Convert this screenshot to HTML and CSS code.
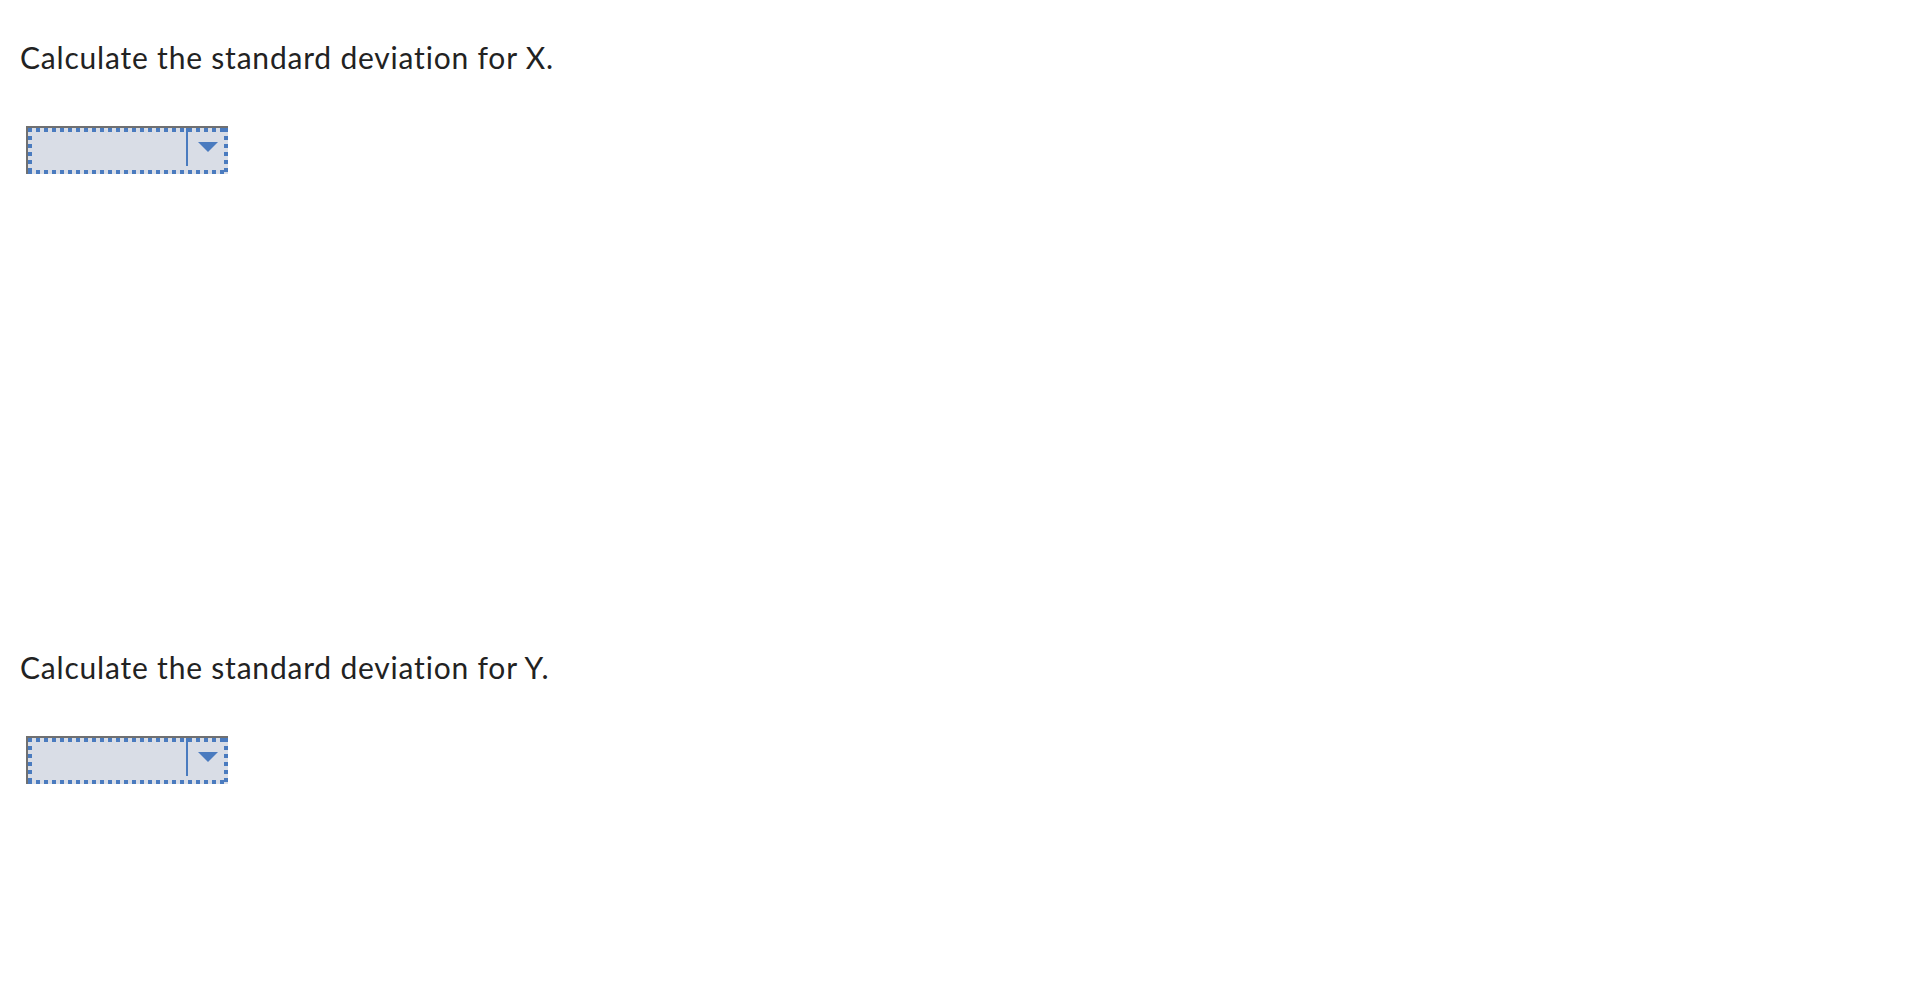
FILE: index.html
```html
<!DOCTYPE html>
<html lang="en">
<head>
    <meta charset="UTF-8">
    <meta name="viewport" content="width=device-width, initial-scale=1.0">
    <title>Standard Deviation</title>
    <link rel="stylesheet" href="styles.css">
</head>
<body>
    <div class="question">
        <p class="prompt">Calculate the standard deviation for X.</p>
        <div class="dropdown" role="combobox" aria-label="Standard deviation for X">
            <div class="dropdown-value"></div>
            <div class="dropdown-toggle"><span class="arrow"></span></div>
        </div>
    </div>

    <div class="question">
        <p class="prompt">Calculate the standard deviation for Y.</p>
        <div class="dropdown" role="combobox" aria-label="Standard deviation for Y">
            <div class="dropdown-value"></div>
            <div class="dropdown-toggle"><span class="arrow"></span></div>
        </div>
    </div>
</body>
</html>
```

FILE: styles.css
```css
* {
    margin: 0;
    padding: 0;
    box-sizing: border-box;
}

body {
    font-family: 'Lato', 'Open Sans', sans-serif;
    background: #fff;
    color: #222;
}

.question {
    padding: 39px 20px 0;
}

.question + .question {
    padding-top: 475px;
}

.prompt {
    font-size: 30px;
    line-height: 36px;
    letter-spacing: 0.8px;
}

.dropdown {
    position: relative;
    display: flex;
    width: 202px;
    height: 48px;
    margin-top: 51px;
    margin-left: 6px;
    background: #d9dde6;
    border-top: 2px solid #707070;
    border-left: 2px solid #707070;
}

/* dotted focus ring */
.dropdown::before {
    content: '';
    position: absolute;
    inset: 0;
    pointer-events: none;
    background:
        repeating-linear-gradient(90deg, #4a7bbf 0 4px, transparent 4px 8px) left top / 100% 4px no-repeat,
        repeating-linear-gradient(90deg, #4a7bbf 0 4px, transparent 4px 8px) left bottom / 100% 4px no-repeat,
        repeating-linear-gradient(180deg, #4a7bbf 0 4px, transparent 4px 8px) left top / 4px 100% no-repeat,
        repeating-linear-gradient(180deg, #4a7bbf 0 4px, transparent 4px 8px) right top / 4px 100% no-repeat;
}

.dropdown-value {
    flex: 1;
}

.dropdown-toggle {
    width: 42px;
    height: 38px;
    border-left: 2px solid #4a7bbf;
    display: flex;
    justify-content: center;
    align-items: center;
}

.arrow {
    width: 0;
    height: 0;
    border-left: 10px solid transparent;
    border-right: 10px solid transparent;
    border-top: 10px solid #4a7bbf;
}
```
